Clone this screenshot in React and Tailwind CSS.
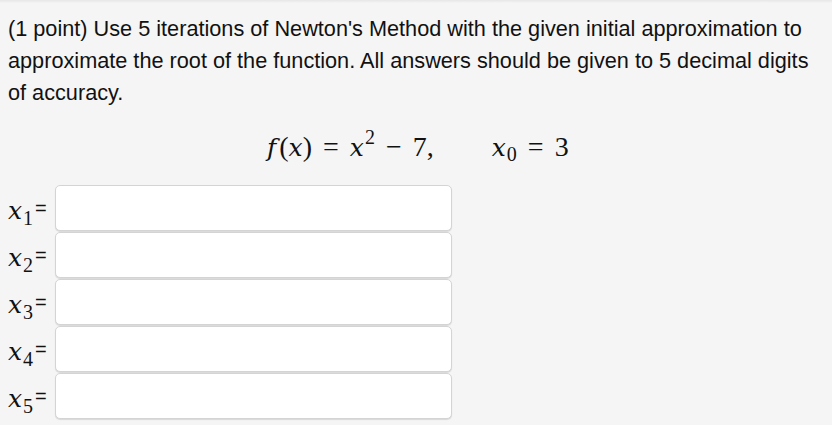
import React from 'react';

const math = "font-['Liberation_Serif','DejaVu_Serif',serif]";
const mi = "font-['DejaVu_Serif','Noto_Serif',serif]";

function Label({ n }) {
    return (
        <div className={`w-[55px] shrink-0 pl-[8px] flex items-baseline text-[#111] relative top-[2px] ${math}`}>
            <span className={`${mi} text-[25px] leading-none`}>𝑥</span>
            <span className="text-[20px] leading-none relative top-[6px] ml-[1px]">{n}</span>
            <span className="font-['Liberation_Sans',Arial,sans-serif] text-[20px] leading-none ml-[2px] relative -top-[4px]">=</span>
        </div>
    );
}

export default function App() {
    const rows = [1, 2, 3, 4, 5];
    return (
        <div className="w-[832px] h-[425px] bg-[#f5f5f5] overflow-hidden relative">
            <div className="absolute top-0 left-0 right-0 h-[3px] bg-gradient-to-b from-[#e6e6e6] to-[#f5f5f5]" />
            <p className="pt-[13px] pl-[8px] w-[820px] font-['Liberation_Sans',Arial,sans-serif] text-[21.7px] leading-[32px] text-[#111]">
                (1 point) Use 5 iterations of Newton's Method with the given initial approximation to approximate the root of the function. All answers should be given to 5 decimal digits of accuracy.
            </p>

            <div className={`mt-[24px] h-[34px] flex items-baseline text-[28px] text-[#111] leading-none ${math}`}>
                <div className="pl-[267px] flex items-baseline">
                    <span className={`${mi} text-[25px]`}>𝑓</span>
                    <span className="ml-[3px]">(</span>
                    <span className={`${mi} text-[25px]`}>𝑥</span>
                    <span>)</span>
                    <span className="mx-[11px]">=</span>
                    <span className={`${mi} text-[25px]`}>𝑥</span>
                    <span className="text-[20px] relative -top-[12px] ml-[1px]">2</span>
                    <span className="mx-[11px]">−</span>
                    <span>7,</span>
                </div>
                <div className="ml-[58px] flex items-baseline">
                    <span className={`${mi} text-[25px]`}>𝑥</span>
                    <span className="text-[20px] relative top-[5px] ml-[1px]">0</span>
                    <span className="mx-[11px]">=</span>
                    <span>3</span>
                </div>
            </div>

            <div className="mt-[18px] flex flex-col gap-[1px]">
                {rows.map((n) => (
                    <div key={n} className="flex items-center h-[46px]">
                        <Label n={n} />
                        <input
                            type="text"
                            className="w-[397px] h-[46px] bg-white border border-[#d4d4d4] rounded-[5px] shadow-[0_1px_1px_rgba(0,0,0,0.12)] outline-none"
                        />
                    </div>
                ))}
            </div>
        </div>
    );
}
